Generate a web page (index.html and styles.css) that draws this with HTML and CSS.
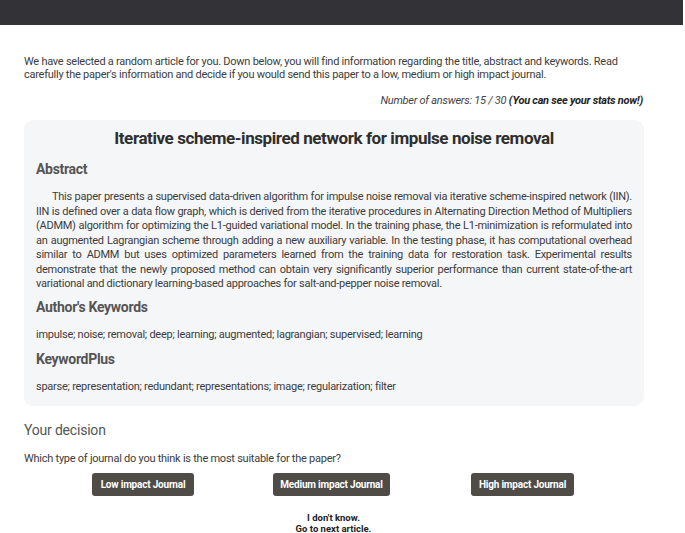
FILE: index.html
```html
<!DOCTYPE html>
<html lang="en">
<head>
<meta charset="utf-8">
<title>Journal decision</title>
<link rel="stylesheet" href="styles.css">
</head>
<body>
<header class="topbar"></header>
<main class="page">
  <p class="intro">We have selected a random article for you. Down below, you will find information regarding the title, abstract and keywords. Read carefully the paper's information and decide if you would send this paper to a low, medium or high impact journal.</p>
  <p class="count">Number of answers: 15 / 30 <strong>(You can see your stats now!)</strong></p>
  <section class="card">
    <h1 class="title">Iterative scheme-inspired network for impulse noise removal</h1>
    <h2 class="sub">Abstract</h2>
    <p class="abstract">This paper presents a supervised data-driven algorithm for impulse noise removal via iterative scheme-inspired network (IIN). IIN is defined over a data flow graph, which is derived from the iterative procedures in Alternating Direction Method of Multipliers (ADMM) algorithm for optimizing the L1-guided variational model. In the training phase, the L1-minimization is reformulated into an augmented Lagrangian scheme through adding a new auxiliary variable. In the testing phase, it has computational overhead similar to ADMM but uses optimized parameters learned from the training data for restoration task. Experimental results demonstrate that the newly proposed method can obtain very significantly superior performance than current state-of-the-art variational and dictionary learning-based approaches for salt-and-pepper noise removal.</p>
    <h2 class="sub sub-kw">Author's Keywords</h2>
    <p class="kw kw-author">impulse; noise; removal; deep; learning; augmented; lagrangian; supervised; learning</p>
    <h2 class="sub sub-plus">KeywordPlus</h2>
    <p class="kw kw-plus">sparse; representation; redundant; representations; image; regularization; filter</p>
  </section>
  <h2 class="decision">Your decision</h2>
  <p class="question">Which type of journal do you think is the most suitable for the paper?</p>
  <div class="choices">
    <button class="btn btn-low">Low impact Journal</button>
    <button class="btn btn-med">Medium impact Journal</button>
    <button class="btn btn-high">High impact Journal</button>
  </div>
  <p class="skip">I don't know.<br>Go to next article.</p>
</main>
</body>
</html>
```
FILE: styles.css
```css
* { box-sizing: border-box; }
html, body { margin: 0; padding: 0; background: #fff; }
body {
  font-family: Roboto, "Liberation Sans", sans-serif;
  color: #3a3a3a;
  width: 685px;
  overflow: hidden;
}
.topbar {
  height: 25px;
  width: 683px;
  background: #333236;
}
.page {
  padding: 30px 42px 0 24px;
}
.intro {
  margin: 0;
  font-size: 11px;
  line-height: 13px;
  letter-spacing: -0.25px;
  color: #3c3c3c;
}
.count {
  margin: 13px 0 0;
  text-align: right;
  font-style: italic;
  font-size: 11px;
  line-height: 13px;
  letter-spacing: -0.25px;
  color: #444;
}
.count strong { color: #222; }
.card {
  margin: 13px 0 0;
  width: 620px;
  background: #f5f6f8;
  border-radius: 9px;
  padding: 7px 12px 13px 12px;
}
.title {
  margin: 0;
  text-align: center;
  font-size: 17px;
  line-height: 22px;
  font-weight: 700;
  letter-spacing: -0.42px;
  color: #2e2e2e;
}
.sub {
  margin: 11px 0 0;
  font-size: 14px;
  line-height: 18px;
  font-weight: 700;
  letter-spacing: -0.3px;
  color: #555;
}
.abstract {
  margin: 12px 0 0;
  font-size: 11px;
  line-height: 14.5px;
  letter-spacing: -0.25px;
  text-align: justify;
  text-indent: 16px;
  color: #3c3c3c;
}
.sub-kw { margin-top: 6px; }
.sub-plus { margin-top: 9px; }
.kw {
  margin: 11px 0 0;
  font-size: 11px;
  line-height: 13px;
  letter-spacing: -0.25px;
  color: #3c3c3c;
}
.kw-author { margin-top: 12px; }
.kw-plus { margin-top: 12px; }
.decision {
  margin: 15px 0 0;
  font-size: 14px;
  line-height: 18px;
  font-weight: 400;
  letter-spacing: -0.2px;
  color: #555;
}
.question {
  margin: 13px 0 0;
  font-size: 11px;
  line-height: 13px;
  letter-spacing: -0.25px;
  color: #3c3c3c;
}
.choices {
  margin-top: 8px;
  display: flex;
  height: 23px;
}
.btn {
  font-family: Roboto, "Liberation Sans", sans-serif;
  height: 23px;
  border: 0;
  border-radius: 3px;
  background: #4f4b47;
  color: #fff;
  font-size: 10px;
  font-weight: 700;
  letter-spacing: -0.2px;
  padding: 0;
}
.btn-low { margin-left: 68px; width: 102px; }
.btn-med { margin-left: 79px; width: 117px; }
.btn-high { margin-left: 81px; width: 103px; }
.skip {
  margin: 16px 0 0;
  width: 619px;
  text-align: center;
  font-size: 9.5px;
  line-height: 11px;
  font-weight: 700;
  color: #222;
}
```
